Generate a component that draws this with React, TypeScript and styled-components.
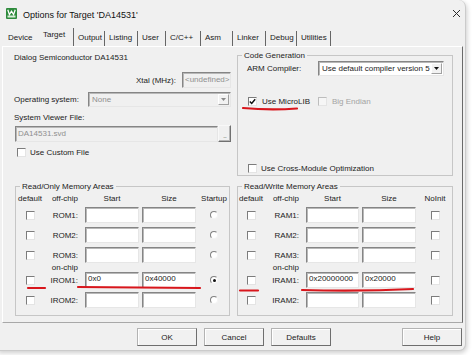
import React from 'react';
import styled, {createGlobalStyle} from 'styled-components';

const GlobalStyle = createGlobalStyle`
  html, body {
    margin: 0;
    padding: 0;
    background: #fff;
  }
  body {
    font-family: "Liberation Sans", Arial, sans-serif;
  }
`;

type MemRowType = {
    name: string
    start?: string
    size?: string
    on?: boolean
}

const romRows: MemRowType[] = [
    {name: 'ROM1:'},
    {name: 'ROM2:'},
    {name: 'ROM3:'},
    {name: 'on-chip'},
    {name: 'IROM1:', start: '0x0', size: '0x40000', on: true},
    {name: 'IROM2:'},
];

const ramRows: MemRowType[] = [
    {name: 'RAM1:'},
    {name: 'RAM2:'},
    {name: 'RAM3:'},
    {name: 'on-chip'},
    {name: 'IRAM1:', start: '0x20000000', size: '0x20000'},
    {name: 'IRAM2:'},
];

const tabs = [
    {label: 'Device', w: 35, sep: false},
    {label: 'Target', w: 35, active: true},
    {label: 'Output', w: 31},
    {label: 'Listing', w: 33},
    {label: 'User', w: 28},
    {label: 'C/C++', w: 35},
    {label: 'Asm', w: 32},
    {label: 'Linker', w: 33},
    {label: 'Debug', w: 31},
    {label: 'Utilities', w: 34},
];

const Frame = styled.div`
  position: relative;
  width: 474px;
  height: 355px;
  overflow: hidden;
  background: #fff;
`;

const Dialog = styled.div`
  margin-left: -3px;
  width: 469px;
  height: 351px;
  box-sizing: border-box;
  background: #f0f0f0;
  border-right: 1px solid #cbcbcb;
  border-bottom: 1px solid #cbcbcb;
  border-radius: 0 7px 7px 0;
  box-shadow: 1px 2px 5px rgba(0, 0, 0, 0.2);
  display: flex;
  flex-direction: column;
  font-size: 8px;
  color: #222;
`;

const TitleBar = styled.div`
  height: 27px;
  flex-shrink: 0;
  display: flex;
  align-items: center;
  padding: 0 4px 0 9px;
`;

const Title = styled.span`
  margin-left: 6px;
  padding-top: 3px;
  font-size: 9px;
  color: #111;
`;

const Close = styled.div`
  margin-left: auto;
  display: flex;
`;

const TabStrip = styled.div`
  height: 19px;
  flex-shrink: 0;
  display: flex;
  align-items: flex-end;
  padding-left: 7px;
`;

const Tab = styled.div<{ $w: number, $active?: boolean, $sep?: boolean }>`
  width: ${props => props.$w}px;
  height: ${props => props.$active ? 18 : 15}px;
  box-sizing: border-box;
  padding-left: 4px;
  line-height: ${props => props.$active ? 14 : 13}px;
  white-space: nowrap;
  border-right: 1px solid ${props => props.$sep ? '#666' : 'transparent'};
`;

const Page = styled.div`
  margin: 0 2px 0 5px;
  height: 277px;
  flex-shrink: 0;
  box-sizing: border-box;
  border-top: 1px solid #fff;
  border-left: 1px solid #fff;
  border-right: 1px solid #6a6a6a;
  border-bottom: 1px solid #a8a8a8;
  padding: 0 9px 0 11px;
  display: grid;
  grid-template-columns: 217px 216px;
  grid-template-rows: 134px 1fr;
  column-gap: 6px;
`;

const Column = styled.div`
  display: flex;
  flex-direction: column;
`;

const Line = styled.div<{ $mt: number }>`
  margin-top: ${props => props.$mt}px;
  height: 12px;
  line-height: 12px;
  white-space: nowrap;
`;

const XtalRow = styled.div`
  margin-top: 8px;
  height: 16px;
  display: flex;
  align-items: center;
  justify-content: flex-end;
  gap: 6px;
`;

const FormRow = styled.div<{ $mt: number }>`
  margin-top: ${props => props.$mt}px;
  display: flex;
  align-items: center;
  justify-content: space-between;
`;

const CheckRow = styled.div<{ $mt: number, $pl: number }>`
  margin-top: ${props => props.$mt}px;
  padding-left: ${props => props.$pl}px;
  height: 12px;
  display: flex;
  align-items: center;
  gap: 4px;
  white-space: nowrap;
`;

const CheckItem = styled.div<{ $w?: number, $muted?: boolean }>`
  display: flex;
  align-items: center;
  gap: 5px;
  width: ${props => props.$w ? props.$w + 'px' : 'auto'};
  margin-right: ${props => props.$w ? -4 : 0}px;
  color: ${props => props.$muted ? '#a3a3a3' : 'inherit'};
`;

const CheckBox = styled.span<{ $disabled?: boolean }>`
  width: 9px;
  height: 9px;
  flex-shrink: 0;
  box-sizing: border-box;
  display: inline-flex;
  align-items: center;
  justify-content: center;
  background: ${props => props.$disabled ? '#f6f6f6' : '#fff'};
  border-top: 1px solid ${props => props.$disabled ? '#bdbdbd' : '#7c7c7c'};
  border-left: 1px solid ${props => props.$disabled ? '#bdbdbd' : '#7c7c7c'};
  border-right: 1px solid #e4e4e4;
  border-bottom: 1px solid #e4e4e4;
`;

const Radio = styled.span<{ $on?: boolean }>`
  width: 8px;
  height: 8px;
  box-sizing: border-box;
  border-radius: 50%;
  border: 1px solid;
  border-color: #808080 #f4f4f4 #f4f4f4 #808080;
  background: #fff;
  display: flex;
  align-items: center;
  justify-content: center;

  &::after {
    content: '';
    width: 3px;
    height: 3px;
    border-radius: 50%;
    background: ${props => props.$on ? '#111' : 'transparent'};
  }
`;

const Field = styled.div<{ $w?: number, $disabled?: boolean, $top?: boolean, $ml?: number }>`
  width: ${props => props.$w ? props.$w + 'px' : 'auto'};
  margin-left: ${props => props.$ml || 0}px;
  height: 16px;
  box-sizing: border-box;
  background: ${props => props.$disabled ? '#f0f0f0' : '#fff'};
  border-top: 1px solid #858585;
  border-left: 1px solid #858585;
  border-right: 1px solid #e6e6e6;
  border-bottom: 1px solid #e6e6e6;
  box-shadow: inset 1px 1px 0 #b8b8b8;
  padding: 0 2px;
  line-height: ${props => props.$top ? 11 : 14}px;
  color: ${props => props.$disabled ? '#8f8f8f' : '#1b1b1b'};
  white-space: nowrap;
  overflow: hidden;
`;

const Select = styled.div<{ $w: number, $disabled?: boolean }>`
  width: ${props => props.$w}px;
  height: 15px;
  box-sizing: border-box;
  display: flex;
  background: ${props => props.$disabled ? '#f0f0f0' : '#fff'};
  color: ${props => props.$disabled ? '#8f8f8f' : '#1b1b1b'};
  border-top: 1px solid #858585;
  border-left: 1px solid #858585;
  border-right: 1px solid #e6e6e6;
  border-bottom: 1px solid #e6e6e6;
  box-shadow: inset 1px 1px 0 #b8b8b8;
`;

const SelectText = styled.span`
  flex: 1;
  padding-left: 3px;
  line-height: 13px;
  white-space: nowrap;
  overflow: hidden;
`;

const ArrowBtn = styled.span`
  width: 11px;
  margin: 1px;
  box-sizing: border-box;
  display: flex;
  align-items: center;
  justify-content: center;
  background: #f2f2f2;
  border: 1px solid;
  border-color: #fff #a0a0a0 #a0a0a0 #fff;
`;

const Browse = styled.div`
  width: 13px;
  height: 17px;
  box-sizing: border-box;
  background: #f0f0f0;
  border: 1px solid;
  border-color: #f8f8f8 #707070 #707070 #f8f8f8;
  box-shadow: inset -1px -1px 0 #b5b5b5;
  color: #8a8a8a;
  text-align: center;
  line-height: 19px;
  font-size: 7px;
  letter-spacing: -1px;
`;

const Group = styled.fieldset<{ $h: number, $mt?: number, $mx?: number }>`
  margin: ${props => props.$mt || 0}px ${props => props.$mx || 0}px 0;
  padding: 0 0 1px;
  min-width: 0;
  height: ${props => props.$h}px;
  box-sizing: border-box;
  border: 1px solid #c6c6c6;
  display: flex;
  flex-direction: column;
`;

const Legend = styled.legend`
  margin-left: 4px;
  padding: 0 2px;
  line-height: 11px;
  font-size: 8px;
`;

const CompilerRow = styled.div`
  height: 15px;
  padding: 0 8px 0 9px;
  display: flex;
  align-items: center;
  justify-content: space-between;
  white-space: nowrap;
`;

const MemGrid = styled.div<{ $cols: string }>`
  display: grid;
  grid-template-columns: ${props => props.$cols};
  grid-template-rows: 13px 20px 20px 20px 5px 20px 20px;
  column-gap: 3px;
  align-items: center;
`;

const Head = styled.span<{ $right?: boolean }>`
  text-align: ${props => props.$right ? 'right' : 'center'};
  padding-right: ${props => props.$right ? 4 : 0}px;
  white-space: nowrap;
  line-height: 10px;
`;

const Cell = styled.span`
  display: flex;
  justify-content: center;
`;

const RowLabel = styled.span`
  text-align: right;
  padding-right: 4px;
  white-space: nowrap;
`;

const OnChip = styled(RowLabel)`
  line-height: 5px;
`;

const Filler = styled.span`
  grid-column: span 3;
`;

const ButtonBar = styled.div`
  display: flex;
  gap: 7px;
  padding: 5px 3px 0 140px;
`;

const Button = styled.button<{ $push?: boolean }>`
  width: 60px;
  height: 18px;
  margin-left: ${props => props.$push ? 'auto' : '0'};
  padding: 0;
  font-family: inherit;
  font-size: 8px;
  color: #1b1b1b;
  background: #f1f1f1;
  border: 1px solid;
  border-color: #b3b3b3 #6e6e6e #6e6e6e #b3b3b3;
  box-shadow: inset 1px 1px 0 #fff;
  border-radius: 0;
`;

const Marks = styled.svg`
  position: absolute;
  left: 0;
  top: 0;
  pointer-events: none;
`;

const Check = ({checked, disabled}: { checked?: boolean, disabled?: boolean }) => (
    <CheckBox $disabled={disabled}>
        {checked && (
            <svg width="7" height="7" viewBox="0 0 7 7">
                <path d="M0.8 3.4 L2.7 5.4 L6.2 1.2" fill="none" stroke="#111" strokeWidth="1.5"/>
            </svg>
        )}
    </CheckBox>
);

const Arrow = ({disabled}: { disabled?: boolean }) => (
    <ArrowBtn>
        <svg width="5" height="3" viewBox="0 0 5 3">
            <path d="M0 0 L5 0 L2.5 3 Z" fill={disabled ? '#8a8a8a' : '#111'}/>
        </svg>
    </ArrowBtn>
);

type MemoryAreaPropsType = {
    title: string
    last: string
    cols: string
    rows: MemRowType[]
    radio?: boolean
}

const MemoryArea = (props: MemoryAreaPropsType) => (
    <Group $h={135} $mx={props.radio ? 1 : 0}>
        <Legend>{props.title}</Legend>
        <MemGrid $cols={props.cols}>
            <Head>default</Head>
            <Head $right>off-chip</Head>
            <Head>Start</Head>
            <Head>Size</Head>
            <Head>{props.last}</Head>
            {props.rows.map(r => r.name === 'on-chip' ? (
                <React.Fragment key={r.name}>
                    <span/>
                    <OnChip>on-chip</OnChip>
                    <Filler/>
                </React.Fragment>
            ) : (
                <React.Fragment key={r.name}>
                    <Cell><Check/></Cell>
                    <RowLabel>{r.name}</RowLabel>
                    <Field $top>{r.start}</Field>
                    <Field $top>{r.size}</Field>
                    <Cell>{props.radio ? <Radio $on={r.on}/> : <Check/>}</Cell>
                </React.Fragment>
            ))}
        </MemGrid>
    </Group>
);

export default function App() {
    return (
        <Frame>
            <GlobalStyle/>
            <Dialog>
                <TitleBar>
                    <svg width="11" height="11" viewBox="0 0 11 11">
                        <rect x="0" y="0" width="11" height="11" rx="1" fill="#2e8b3c"/>
                        <rect x="1.5" y="7.5" width="8" height="2" fill="#d9efd9"/>
                        <path d="M1.8 1.8 L3.4 6.6 L5.5 3.2 L7.6 6.6 L9.2 1.8" fill="none" stroke="#fff"
                              strokeWidth="1.3"/>
                    </svg>
                    <Title>Options for Target 'DA14531'</Title>
                    <Close>
                        <svg width="9" height="9" viewBox="0 0 9 9">
                            <path d="M1 1 L8 8 M8 1 L1 8" stroke="#2b2b2b" strokeWidth="1"/>
                        </svg>
                    </Close>
                </TitleBar>

                <TabStrip>
                    {tabs.map(t => (
                        <Tab key={t.label} $w={t.w} $active={t.active} $sep={t.sep !== false}>
                            {t.label}
                        </Tab>
                    ))}
                </TabStrip>

                <Page>
                    <Column>
                        <Line $mt={5}>Dialog Semiconductor DA14531</Line>
                        <XtalRow>
                            <span>Xtal (MHz):</span>
                            <Field $w={49} $disabled>&lt;undefined&gt;</Field>
                        </XtalRow>
                        <FormRow $mt={4}>
                            <span>Operating system:</span>
                            <Select $w={143} $disabled>
                                <SelectText>None</SelectText>
                                <Arrow disabled/>
                            </Select>
                        </FormRow>
                        <Line $mt={5}>System Viewer File:</Line>
                        <FormRow $mt={1}>
                            <Field $w={203} $disabled $ml={1}>DA14531.svd</Field>
                            <Browse>...</Browse>
                        </FormRow>
                        <CheckRow $mt={4} $pl={3}>
                            <Check/>
                            <span>Use Custom File</span>
                        </CheckRow>
                    </Column>

                    <Column>
                        <Group $h={126} $mt={3}>
                            <Legend>Code Generation</Legend>
                            <CompilerRow>
                                <span>ARM Compiler:</span>
                                <Select $w={126}>
                                    <SelectText>Use default compiler version 5</SelectText>
                                    <Arrow/>
                                </Select>
                            </CompilerRow>
                            <CheckRow $mt={19} $pl={10}>
                                <CheckItem $w={70}>
                                    <Check checked/>
                                    <span>Use MicroLIB</span>
                                </CheckItem>
                                <CheckItem $muted>
                                    <Check disabled/>
                                    <span>Big Endian</span>
                                </CheckItem>
                            </CheckRow>
                            <CheckRow $mt={55} $pl={10}>
                                <Check/>
                                <span>Use Cross-Module Optimization</span>
                            </CheckRow>
                        </Group>
                    </Column>

                    <MemoryArea title="Read/Only Memory Areas" last="Startup" radio
                                cols="28px 35px 54px 54px 30px" rows={romRows}/>
                    <MemoryArea title="Read/Write Memory Areas" last="NoInit"
                                cols="26px 36px 53px 54px 32px" rows={ramRows}/>
                </Page>

                <ButtonBar>
                    <Button>OK</Button>
                    <Button>Cancel</Button>
                    <Button>Defaults</Button>
                    <Button $push>Help</Button>
                </ButtonBar>
            </Dialog>

            <Marks width="474" height="355" viewBox="0 0 474 355">
                <g stroke="#d8161c" strokeWidth="2.2" strokeLinecap="round" fill="none">
                    <path d="M243 108 Q 270 110.5 297 108.5"/>
                    <path d="M28 288 L45 288"/>
                    <path d="M78 287 L200 288"/>
                    <path d="M240 290.5 L258 290.5"/>
                    <path d="M302 290 Q 360 291.5 413 289"/>
                </g>
            </Marks>
        </Frame>
    );
}
